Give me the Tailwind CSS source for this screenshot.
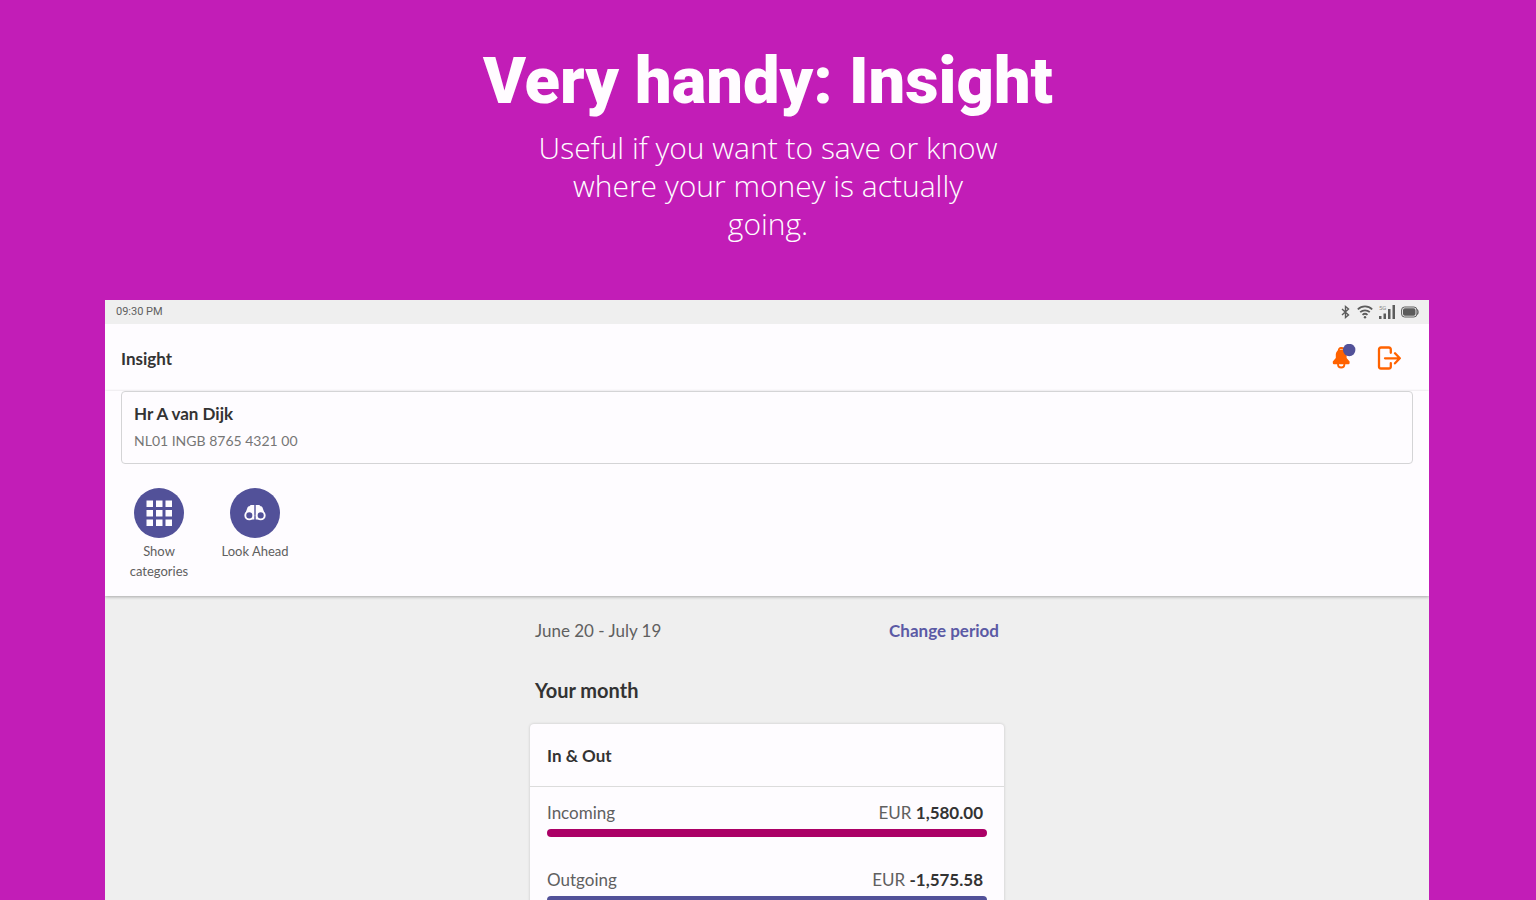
<!DOCTYPE html>
<html lang="en">
<head>
    <meta charset="UTF-8">
    <meta name="viewport" content="width=device-width, initial-scale=1.0">
    <title>Very handy: Insight</title>
    <script src="https://cdn.jsdelivr.net/npm/@tailwindcss/browser@4"></script>
</head>
<body class="h-screen overflow-hidden bg-[#c21db7] font-['Lato','Open_Sans',sans-serif] text-[#606060] flex flex-col">

    <!-- Headline -->
    <header class="h-[300px] shrink-0 pt-[41px] text-center text-[#fffcff]">
        <h1 class="font-['Roboto',sans-serif] text-[65px] leading-[80px] font-black">Very handy: Insight</h1>
        <p class="mx-auto mt-2 w-[470px] font-['Open_Sans',sans-serif] text-[30px] leading-[38px] font-light">Useful if you want to save or know where your money is actually going.</p>
    </header>

    <!-- Tablet screen -->
    <main class="ml-[105px] mr-[107px] grow overflow-hidden bg-[#efefef]">
        <div class="h-6 pl-[11px] pr-[10px] flex items-center justify-between font-['Roboto',sans-serif] text-[11px]">
            <span>09:30 PM</span>
            <div class="flex items-center gap-[6px]">
                <svg class="w-[9px] h-[14px]" viewBox="0 0 9 14" fill="none" stroke="#5c5c5c" stroke-width="1.4"><path d="M1 4l6.500 6L4.500 12.500v-11l3 2.500L1 10"/></svg>
                <svg class="ml-px w-4 h-[14px]" viewBox="0 0 16 14" fill="none" stroke="#5c5c5c" stroke-width="1.7"><path d="M.8 4.300a10.300 10.300 0 0 1 14.400 0M3.200 7.200a7 7 0 0 1 9.600 0M5.500 9.900a3.700 3.700 0 0 1 5 0"/><circle cx="8" cy="12.300" r="1.200" fill="#5c5c5c" stroke="none"/></svg>
                <svg class="w-4 h-[14px]" viewBox="0 0 16 14" fill="#5c5c5c"><text x="0" y="5" font-size="6" opacity=".7">5G</text><path d="M0 11h2.500v3H0zM4.500 8.500H7V14H4.500zM9 4h2.500v10H9zM13.500 0H16v14h-2.500z"/></svg>
                <svg class="w-[18px] h-[14px]" viewBox="0 0 18 14"><rect x=".6" y="2" width="15.300" height="10" rx="3" fill="none" stroke="#5c5c5c"/><rect x="2" y="3.300" width="12.500" height="7.400" rx="1.800" fill="#5c5c5c"/><path d="M16.300 4.500q1.500 2.500 0 5" fill="none" stroke="#5c5c5c" stroke-width="1.200"/></svg>
            </div>
        </div>

        <div class="h-[68px] px-4 bg-[#fefcff] flex items-center justify-between border-b border-[#e6e4e6]">
            <h2 class="pt-0.5 text-[17px] font-bold text-[#333]">Insight</h2>
            <div class="flex items-center gap-[21px] pr-3">
                <button type="button" aria-label="Notifications" class="w-6 h-7">
                    <svg viewBox="0 0 24 28" fill="#ff6200"><rect x="6.800" y="4" width="5" height="5" rx="2" fill="none" stroke="#ff6200" stroke-width="1.800"/><ellipse cx="9.200" cy="20.500" rx="3.200" ry="3" fill="none" stroke="#ff6200" stroke-width="1.800"/><path d="M9.200 5.500C5 5.500 3.800 8.500 3.800 11.500V14L.8 17.500V19q0 1.200 1.200 1.200h14.400q1.200 0 1.200-1.200v-1.500l-3-3.500v-2.500c0-3-1.200-6-5.400-6z"/><circle cx="17.200" cy="6" r="6.200" fill="#525199"/></svg>
                </button>
                <button type="button" aria-label="Log out" class="w-6 h-6">
                    <svg viewBox="0 0 24 24" fill="none" stroke="#ff6200" stroke-width="2.300" stroke-linecap="round" stroke-linejoin="round"><path d="M13.800 6.800V3.500q0-2-2-2H4q-2 0-2 2v17q0 2 2 2h7.800q2 0 2-2v-3.300M8 12.300h14.800M18 7.300l4.800 5-4.800 5"/></svg>
                </button>
            </div>
        </div>

        <section class="px-4 pb-[15px] bg-[#fefcff] shadow-[0_1px_3px_rgba(0,0,0,0.3)]">
            <div class="-mt-px h-[73px] px-3 pt-2 rounded-[4px] border border-[#d4d4d6]">
                <p class="text-[17px] leading-7 font-bold text-[#333]">Hr A van Dijk</p>
                <p class="text-[14px] leading-[26px] text-[#767676]">NL01 INGB 8765 4321 00</p>
            </div>
            <div class="mt-6 flex gap-5 text-[13px] leading-5">
                <button type="button" class="w-[76px] flex flex-col items-center">
                    <svg class="w-[50px] h-[50px] mb-[3px]" viewBox="0 0 50 50"><circle cx="25" cy="25" r="25" fill="#525199"/><path fill="#fefcff" d="M12.500 12.500h6.500V19h-6.500zM22 12.500h6.500V19H22zM31.500 12.500H38V19h-6.500zM12.500 22h6.500v6.500h-6.500zM22 22h6.500v6.500H22zM31.500 22H38v6.500h-6.500zM12.500 31.500h6.500V38h-6.500zM22 31.500h6.500V38H22zM31.500 31.500H38V38h-6.500z"/></svg>
                    Show categories
                </button>
                <button type="button" class="w-[76px] flex flex-col items-center">
                    <svg class="w-[50px] h-[50px] mb-[3px]" viewBox="0 0 50 50"><circle cx="25" cy="25" r="25" fill="#525199"/><path fill="#fefcff" d="M24.300 17v14.500h-2L14.800 27l2.700-7.500q.5-1.200 1.800-1.200L20.800 17zM25.700 17v14.500h2l7.500-4.500-2.700-7.500q-.5-1.200-1.800-1.200L29.200 17z"/><g fill="#525199" stroke="#fefcff" stroke-width="1.900"><circle cx="19.300" cy="27.400" r="4"/><circle cx="30.700" cy="27.400" r="4"/></g></svg>
                    Look Ahead
                </button>
            </div>
        </section>

        <section class="w-[474px] mx-auto text-[17px] leading-6">
            <div class="pt-[23px] px-[5px] flex justify-between">
                <span>June 20 - July 19</span>
                <button type="button" class="font-bold text-[#5b5aa5]">Change period</button>
            </div>
            <h2 class="mt-[33px] px-[5px] text-[20px] leading-7 font-bold text-[#333]">Your month</h2>
            <div class="mt-5 rounded-[4px] bg-[#fefcff] shadow-[0_0_3px_rgba(0,0,0,0.18)]">
                <h3 class="h-[63px] pl-[17px] pt-0.5 flex items-center border-b border-[#dcdcdc] font-bold text-[#333]">In &amp; Out</h3>
                <div class="px-[17px] pt-[14px]">
                    <div class="flex justify-between pr-1">
                        <span>Incoming</span>
                        <span>EUR <b class="text-[#333]">1,580.00</b></span>
                    </div>
                    <div class="mt-1 h-2 rounded-full bg-[#ab0066]"></div>
                </div>
                <div class="px-[17px] pt-[31px] pb-6">
                    <div class="flex justify-between pr-1">
                        <span>Outgoing</span>
                        <span>EUR <b class="text-[#333]">-1,575.58</b></span>
                    </div>
                    <div class="mt-1 h-2 rounded-full bg-[#525199]"></div>
                </div>
            </div>
        </section>
    </main>
</body>
</html>
